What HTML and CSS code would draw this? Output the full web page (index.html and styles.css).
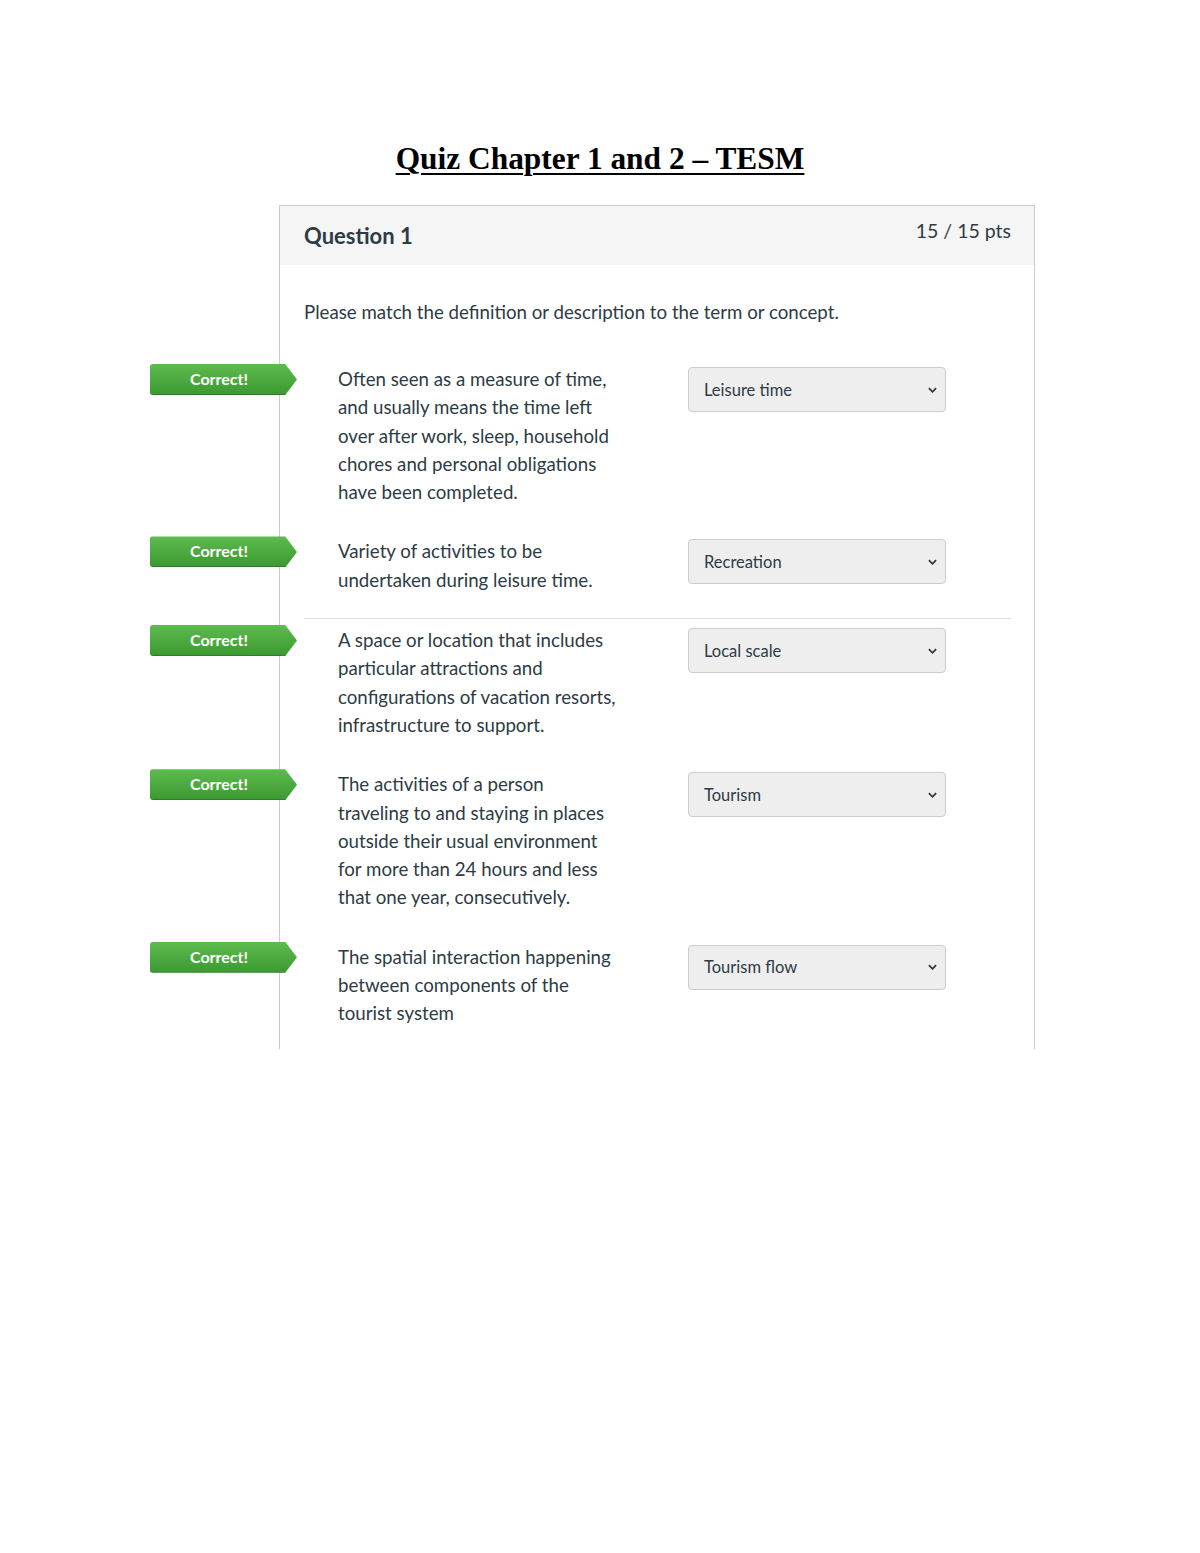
FILE: index.html
```html
<!DOCTYPE html>
<html lang="en">
<head>
  <meta charset="UTF-8">
  <title>Quiz Chapter 1 and 2 – TESM</title>
  <link rel="stylesheet" href="styles.css">
</head>
<body>
  <h1 class="title">Quiz Chapter 1 and 2 – TESM</h1>

  <div class="card">
    <div class="card-header">
      <span class="question-name">Question 1</span>
      <span class="points">15 / 15 pts</span>
    </div>
    <div class="card-body">
      <p class="prompt">Please match the definition or description to the term or concept.</p>

      <div class="row">
        <div class="badge">Correct!</div>
        <div class="answer-text">Often seen as a measure of time, and usually means the time left over after work, sleep, household chores and personal obligations have been completed.</div>
        <div class="select-box"><span>Leisure time</span><svg class="chev" viewBox="0 0 10 6"><path d="M1 1l4 4 4-4" /></svg></div>
      </div>

      <div class="row">
        <div class="badge">Correct!</div>
        <div class="answer-text">Variety of activities to be undertaken during leisure time.</div>
        <div class="select-box"><span>Recreation</span><svg class="chev" viewBox="0 0 10 6"><path d="M1 1l4 4 4-4" /></svg></div>
      </div>

      <div class="divider"></div>

      <div class="row row-after-divider">
        <div class="badge">Correct!</div>
        <div class="answer-text">A space or location that includes particular attractions and configurations of vacation resorts, infrastructure to support.</div>
        <div class="select-box"><span>Local scale</span><svg class="chev" viewBox="0 0 10 6"><path d="M1 1l4 4 4-4" /></svg></div>
      </div>

      <div class="row">
        <div class="badge">Correct!</div>
        <div class="answer-text narrow">The activities of a person traveling to and staying in places outside their usual environment for more than 24 hours and less that one year, consecutively.</div>
        <div class="select-box"><span>Tourism</span><svg class="chev" viewBox="0 0 10 6"><path d="M1 1l4 4 4-4" /></svg></div>
      </div>

      <div class="row">
        <div class="badge">Correct!</div>
        <div class="answer-text narrow">The spatial interaction happening between components of the tourist system</div>
        <div class="select-box"><span>Tourism flow</span><svg class="chev" viewBox="0 0 10 6"><path d="M1 1l4 4 4-4" /></svg></div>
      </div>
    </div>
  </div>
</body>
</html>
```

FILE: styles.css
```css
body {
  margin: 0;
  padding: 0;
  background: #fff;
  font-family: Lato, "Open Sans", sans-serif;
  color: #2d3b45;
}
.title {
  font-family: "Liberation Serif", "Times New Roman", serif;
  font-size: 31.4px;
  font-weight: bold;
  text-decoration: underline;
  text-decoration-thickness: 2px;
  text-underline-offset: 4px;
  text-align: center;
  color: #000;
  margin: 140px 0 27px;
  line-height: 38px;
}
.card {
  margin-left: 279px;
  width: 754px;
  border: 1px solid #c7cdd1;
  border-bottom: none;
}
.card-header {
  display: flex;
  justify-content: space-between;
  align-items: flex-start;
  background: #f5f5f5;
  height: 59px;
  padding: 0 23px 0 24px;
}
.question-name {
  font-size: 22px;
  font-weight: bold;
  margin-top: 16px;
  color: #2d3b45;
}
.points {
  font-size: 19.5px;
  margin-top: 13px;
  color: #2d3b45;
}
.card-body {
  padding: 33px 23px 21px 24px;
}
.prompt {
  margin: 0;
  font-size: 18.7px;
  line-height: 28px;
}
.row {
  position: relative;
  display: flex;
  align-items: flex-start;
  padding-left: 34px;
  margin-top: 31px;
}
.prompt + .row {
  margin-top: 39px;
}
.row-after-divider {
  margin-top: 7px;
}
.answer-text {
  width: 290px;
  font-size: 18.7px;
  line-height: 28.3px;
}
.answer-text.narrow {
  width: 276px;
  margin-right: 14px;
}
.select-box {
  box-sizing: border-box;
  display: flex;
  align-items: center;
  justify-content: space-between;
  width: 258px;
  height: 45px;
  margin-left: 60px;
  margin-top: 2px;
  padding: 0 8px 0 15px;
  background: #eee;
  border: 1px solid #ccc;
  border-radius: 4px;
  font-size: 16.5px;
  color: #2d3b45;
}
.chev {
  width: 9px;
  height: 6px;
  fill: none;
  stroke: #2d3b45;
  stroke-width: 2;
}
.divider {
  height: 1px;
  background: #dde0e2;
  margin-top: 24px;
}
.badge {
  position: absolute;
  left: -154px;
  top: -1px;
  width: 147px;
  height: 31px;
  line-height: 30px;
  padding-left: 3px;
  padding-right: 12px;
  box-sizing: border-box;
  text-align: center;
  color: #fff;
  font-size: 16px;
  font-weight: bold;
  background: linear-gradient(#5dbb4f, #3c9a32);
  border-bottom: 1px solid #2f7d28;
  clip-path: polygon(0 0, 92% 0, 100% 50%, 92% 100%, 0 100%);
  border-radius: 3px 0 0 3px;
}
```
